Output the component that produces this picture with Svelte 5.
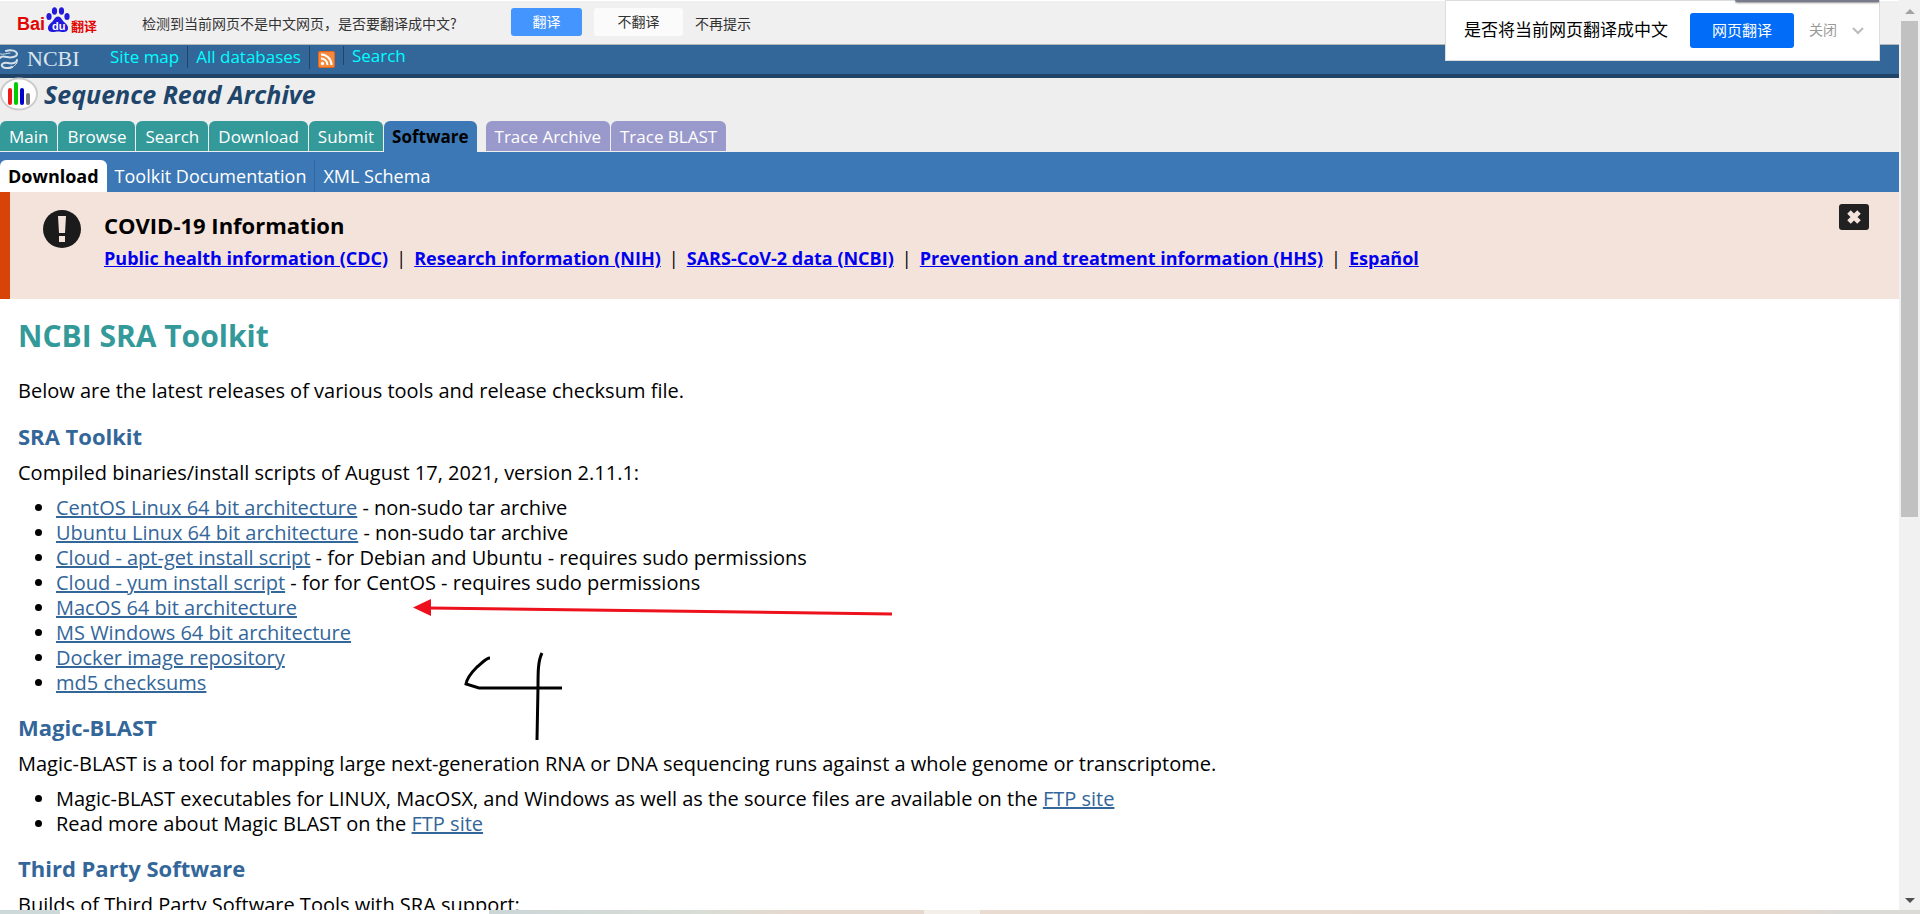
<script>
    const tabs = [
        { label: 'Main' },
        { label: 'Browse' },
        { label: 'Search' },
        { label: 'Download' },
        { label: 'Submit' },
        { label: 'Software', active: true },
        { label: 'Trace Archive', trace: true, first: true },
        { label: 'Trace BLAST', trace: true }
    ];

    const covidLinks = [
        'Public health information (CDC)',
        'Research information (NIH)',
        'SARS-CoV-2 data (NCBI)',
        'Prevention and treatment information (HHS)',
        'Español'
    ];

    const builds = [
        { name: 'CentOS Linux 64 bit architecture', note: 'non-sudo tar archive' },
        { name: 'Ubuntu Linux 64 bit architecture', note: 'non-sudo tar archive' },
        { name: 'Cloud - apt-get install script', note: 'for Debian and Ubuntu - requires sudo permissions' },
        { name: 'Cloud - yum install script', note: 'for for CentOS - requires sudo permissions' },
        { name: 'MacOS 64 bit architecture' },
        { name: 'MS Windows 64 bit architecture' },
        { name: 'Docker image repository' },
        { name: 'md5 checksums' }
    ];

    let showBanner = true;
</script>

<div class="window">
    <div class="viewport">
        <div class="page">
            <div class="translate-bar">
                <a class="baidu" href="#baidu" aria-label="Baidu">
                    <span class="bai">Bai</span>
                    <svg width="24" height="26" viewBox="0 0 24 26">
                        <g fill="#2319dc">
                            <ellipse cx="3" cy="10.500" rx="2.600" ry="3.500" />
                            <ellipse cx="8.500" cy="5" rx="2.600" ry="3.800" />
                            <ellipse cx="15.500" cy="5" rx="2.600" ry="3.800" />
                            <ellipse cx="21" cy="10.500" rx="2.600" ry="3.500" />
                            <path d="M12 10.500c3 0 4 3.500 6 5.500s4 3 4 6-2 4-5 4c-2 0-3-.5-5-.5S9 26 7 26c-3 0-5-1-5-4s2-4 4-6 3-5.500 6-5.500z" />
                        </g>
                        <text x="6" y="24" class="du">du</text>
                    </svg>
                    <span class="fanyi">翻译</span>
                </a>
                <span class="question">检测到当前网页不是中文网页，是否要翻译成中文?</span>
                <button class="yes">翻译</button>
                <button class="no">不翻译</button>
                <button class="never">不再提示</button>
            </div>

            <header class="ncbi">
                <a class="ncbi-logo" href="#ncbi">
                    <svg width="20" height="22" viewBox="0 0 20 22" fill="none" stroke="#d5e0ea" stroke-linecap="round">
                        <path d="M6 2c5-2 11 0 11 3s-6 4-10 3-6-1-7 1" stroke-width="2" />
                        <path d="M17 11c0 3-5 4-9 3s-7 1-6 3 6 3 10 1" stroke-width="2" />
                        <path d="M0 5c4 1 7-1 10-1M5 19c5 1 9-1 12-5" stroke-width="1" />
                    </svg>
                    NCBI
                </a>
                <nav class="top-links">
                    <a href="#map">Site map</a>
                    <a href="#databases">All databases</a>
                    <a class="rss" href="#rss" aria-label="RSS">
                        <svg width="17" height="17" viewBox="0 0 17 17">
                            <rect width="17" height="17" rx="2" fill="#e8641a" />
                            <rect x="1" y="1" width="15" height="15" rx="1" fill="#f58a3c" />
                            <circle cx="4.500" cy="12.500" r="1.700" fill="#fff" />
                            <path d="M3 7.500a6.500 6.500 0 0 1 6.500 6.500M3 3.500a10.500 10.500 0 0 1 10.500 10.500" fill="none" stroke="#fff" stroke-width="2" />
                        </svg>
                    </a>
                    <a class="search" href="#search">Search</a>
                </nav>
            </header>

            <div class="archive">
                <a class="brand" href="#sra">
                    <svg width="38" height="34" viewBox="0 0 38 34">
                        <ellipse cx="19" cy="17" rx="18" ry="15.500" fill="#fff" stroke="#ccc" stroke-width="2" />
                        <g stroke-width="4" stroke-linecap="round">
                            <path d="M10 13v13" stroke="#f01818" />
                            <path d="M16 7v19" stroke="#0c0" />
                            <path d="M22 13v13" stroke="#00c" />
                            <path d="M28 18v8" stroke="#777" />
                        </g>
                    </svg>
                    <span>Sequence Read Archive</span>
                </a>
                <nav class="tabs">
                    {#each tabs as tab}
                        <a
                            href="#tab"
                            class:active={tab.active}
                            class:trace={tab.trace}
                            class:first={tab.first}
                        >{tab.label}</a>
                    {/each}
                </nav>
            </div>

            <nav class="subnav">
                <a class="current" href="#download">Download</a>
                <a href="#docs">Toolkit Documentation</a>
                <a class="divided" href="#schema">XML Schema</a>
            </nav>

            {#if showBanner}
                <section class="covid">
                    <svg class="alert" width="38" height="38" viewBox="0 0 38 38">
                        <circle cx="19" cy="19" r="19" fill="#1b1b1b" />
                        <path d="M15 6h8l-1 17h-6zM16 26h6v6h-6z" fill="#f4e3db" />
                    </svg>
                    <div class="covid-body">
                        <h2>COVID-19 Information</h2>
                        <p>
                            {#each covidLinks as link, i}
                                {#if i > 0}<span class="bar">|</span>{/if}
                                <a href="#covid">{link}</a>
                            {/each}
                        </p>
                    </div>
                    <button class="close" aria-label="Close" on:click={() => (showBanner = false)}>
                        <svg width="14" height="14" viewBox="0 0 14 14">
                            <path d="M2 2l10 10M12 2L2 12" stroke="#f4e3db" stroke-width="5" />
                        </svg>
                    </button>
                </section>
            {/if}

            <main>
                <h1>NCBI SRA Toolkit</h1>
                <p class="intro">Below are the latest releases of various tools and release checksum file.</p>

                <h3>SRA Toolkit</h3>
                <p>Compiled binaries/install scripts of August 17, 2021, version 2.11.1:</p>
                <ul>
                    {#each builds as build}
                        <li><a href="#build">{build.name}</a>{build.note ? ` - ${build.note}` : ''}</li>
                    {/each}
                </ul>

                <h3>Magic-BLAST</h3>
                <p>Magic-BLAST is a tool for mapping large next-generation RNA or DNA sequencing runs against a whole genome or transcriptome.</p>
                <ul>
                    <li>Magic-BLAST executables for LINUX, MacOSX, and Windows as well as the source files are available on the <a href="#ftp">FTP site</a></li>
                    <li>Read more about Magic BLAST on the <a href="#ftp">FTP site</a></li>
                </ul>

                <h3>Third Party Software</h3>
                <p>Builds of Third Party Software Tools with SRA support:</p>
            </main>
        </div>

        <div class="scrollbar">
            <svg width="10" height="5" viewBox="0 0 10 5"><path d="M5 0l5 5H0z" fill="#a3a3a3" /></svg>
            <div class="thumb"></div>
            <svg width="10" height="5" viewBox="0 0 10 5"><path d="M0 0h10L5 5z" fill="#505050" /></svg>
        </div>
    </div>
    <div class="taskbar"></div>

    <div class="popup">
        <span>是否将当前网页翻译成中文</span>
        <button class="translate">网页翻译</button>
        <button class="dismiss">关闭</button>
        <svg width="12" height="8" viewBox="0 0 12 8"><path d="M1 1l5 5 5-5" fill="none" stroke="#bbb" stroke-width="2" /></svg>
    </div>
    <div class="edge"></div>

    <!-- hand-drawn notes on top of the page -->
    <svg class="notes" width="920" height="760" viewBox="0 0 920 760" fill="none">
        <path d="M429 608L892 614" stroke="#ec111c" stroke-width="3" />
        <path d="M413 607.500l18-8.500v17z" fill="#ec111c" />
        <path d="M490 658c-4 0-8 5-13 9-5 5-10 11-11 17l13 4h83M542 653c-4 8-4 19-4 34l-1 53" stroke="#000" stroke-width="3" />
    </svg>
</div>

<style>
:global(body) {
    margin: 0;
    overflow: hidden;
}

.window {
    position: relative;
    display: flex;
    flex-direction: column;
    height: 100vh;
    overflow: hidden;
    background: #fff;
    color: #000;
    font-family: "Open Sans", "Noto Sans CJK SC", sans-serif;
    font-size: 20px;
    line-height: 25px;
}
.viewport {
    flex: 1;
    min-height: 0;
    display: flex;
}
.page {
    flex: 1;
    min-width: 0;
    overflow: hidden;
}
button {
    border: 0;
    padding: 0;
    font-family: inherit;
    background: none;
}

/* translate bar */
.translate-bar {
    display: flex;
    height: 43px;
    border-top: 1px solid #fff;
    border-bottom: 1px solid #b5b5b5;
    background: #f0f0f0;
    font-family: "Noto Sans CJK SC", sans-serif;
    font-size: 14px;
    color: #333;
}
.baidu {
    display: flex;
    gap: 1px;
    width: 125px;
    padding: 5px 0 0 17px;
    text-decoration: none;
    color: #e10601;
    font-weight: 700;
}
.bai {
    padding-top: 6px;
    font-family: "Liberation Sans", sans-serif;
    font-size: 18px;
}
.du {
    font: 700 11px "Liberation Sans", sans-serif;
    fill: #fff;
}
.fanyi {
    padding-top: 7px;
    font-size: 13px;
}
.question {
    width: 369px;
    padding-top: 10px;
}
.yes,
.no {
    height: 28px;
    margin-top: 7px;
    padding-bottom: 2px;
    border-radius: 3px;
    font-size: 14px;
}
.yes {
    width: 71px;
    background: #4595ff;
    color: #fff;
}
.no {
    width: 89px;
    margin-left: 12px;
    background: #fbfbfb;
    color: #333;
}
.never {
    height: 28px;
    margin: 8px 0 0 12px;
    font-size: 14px;
    color: #333;
}

/* ncbi header */
.ncbi {
    display: flex;
    height: 29px;
    background: #336699;
    border-bottom: 4px solid #204468;
    font-size: 17px;
}
.ncbi-logo {
    display: flex;
    gap: 7px;
    width: 102px;
    padding-top: 1px;
    font-family: "Liberation Serif", serif;
    font-size: 22px;
    color: #dbe5ee;
    text-decoration: none;
}
.ncbi-logo svg {
    margin-top: 3px;
}
.top-links {
    display: flex;
    align-items: flex-start;
    padding-top: 1px;
}
.top-links a {
    padding: 0 8px;
    line-height: 22px;
    color: #0ff;
    text-decoration: none;
}
.top-links a + a {
    border-left: 1px solid #204468;
}
.top-links .rss {
    display: flex;
    height: 18px;
    padding: 5px 8px 0;
}
.top-links .search {
    line-height: 19px;
}

/* archive header */
.archive {
    height: 74px;
    background: #eee;
    display: flex;
    flex-direction: column;
    justify-content: space-between;
}
.brand {
    display: flex;
    align-items: center;
    gap: 6px;
    height: 32px;
    text-decoration: none;
    color: #20456b;
    font-size: 25px;
    font-weight: 700;
    font-style: italic;
}
.tabs {
    display: flex;
    align-items: flex-start;
    gap: 1px;
    height: 31px;
    font-size: 17px;
}
.tabs a {
    height: 30px;
    padding: 0 9px;
    border-radius: 6px 6px 0 0;
    background: #339999;
    color: #fff;
    line-height: 31px;
    text-decoration: none;
}
.tabs .active {
    height: 31px;
    padding: 0 8px;
    background: #3c78b5;
    color: #000;
    font-weight: 700;
}
.tabs .trace {
    background: #9999cc;
}
.tabs .first {
    margin-left: 8px;
}

.subnav {
    display: flex;
    align-items: flex-end;
    height: 40px;
    background: #3c78b5;
    font-size: 18px;
}
.subnav a {
    padding: 0 8px;
    line-height: 32px;
    color: #fff;
    text-decoration: none;
}
.subnav .current {
    border-radius: 6px 6px 0 0;
    background: #fff;
    color: #000;
    font-weight: 700;
}
.subnav .divided {
    border-left: 1px solid #336699;
}

/* covid banner */
.covid {
    display: flex;
    align-items: flex-start;
    height: 107px;
    padding-right: 30px;
    border-left: 10px solid #d84408;
    background: #f4e3db;
    box-sizing: border-box;
}
.alert {
    margin: 18px 23px 0 33px;
}
.covid-body {
    flex: 1;
}
.covid h2 {
    margin: 18px 0 0;
    font-size: 22px;
    line-height: 30px;
}
.covid p {
    display: flex;
    margin: 6px 0 0;
    font-size: 18px;
    font-weight: 700;
}
.covid a {
    color: #0000ee;
}
.bar {
    width: 26px;
    text-align: center;
    font-weight: 400;
}
.close {
    display: flex;
    align-items: center;
    justify-content: center;
    width: 30px;
    height: 26px;
    margin-top: 12px;
    border-radius: 3px;
    background: #212121;
}

/* content */
main {
    padding: 0 18px;
}
h1 {
    margin: 16px 0 0;
    font-size: 30px;
    line-height: 42px;
    color: #339999;
}
main p {
    margin: 10px 0;
}
main .intro {
    margin: 21px 0 19px;
}
h3 {
    margin: 0;
    font-size: 22px;
    line-height: 28px;
    color: #336699;
}
ul {
    margin: 10px 0 18px;
    padding-left: 38px;
}
main a {
    color: #336699;
}

.scrollbar {
    display: flex;
    flex-direction: column;
    align-items: center;
    width: 21px;
    background: #f1f1f1;
}
.scrollbar svg {
    margin: 9px 0 7px;
}
.thumb {
    width: 17px;
    height: 54.5%;
    margin-bottom: auto;
    background: #c1c1c1;
}
.taskbar {
    height: 4px;
    background: linear-gradient(90deg, #cdd8d9 60px, #fff 60px, #fff 489px, #ccd6d7 489px, #d8ddd5 700px, #e7d8cd 800px, #e7d8cd 924px, #f5efe9 924px, #f5efe9 980px, #eadbd0 980px, #e7d8cd 1780px, #dcdad6 1840px);
}

/* browser popup */
.popup {
    position: absolute;
    top: 0;
    right: 40px;
    display: flex;
    align-items: center;
    height: 59px;
    padding: 0 15px 0 18px;
    border: 1px solid #ddd;
    background: #fff;
    font-family: "Noto Sans CJK SC", sans-serif;
    font-size: 17px;
}
.popup span {
    padding-bottom: 4px;
}
.translate {
    width: 104px;
    height: 35px;
    margin-left: 22px;
    padding-bottom: 2px;
    border-radius: 3px;
    background: #006cf7;
    color: #fff;
    font-size: 15px;
}
.dismiss {
    margin: 0 15px;
    padding-bottom: 4px;
    color: #999;
    font-size: 14px;
}
.edge {
    position: absolute;
    top: 0;
    right: 41px;
    width: 144px;
    height: 2px;
    border-radius: 0 0 2px 12px;
    background: #777b8b;
    box-shadow: 0 1px 2px #888;
}

.notes {
    position: absolute;
    top: 0;
    left: 0;
    pointer-events: none;
}
</style>
